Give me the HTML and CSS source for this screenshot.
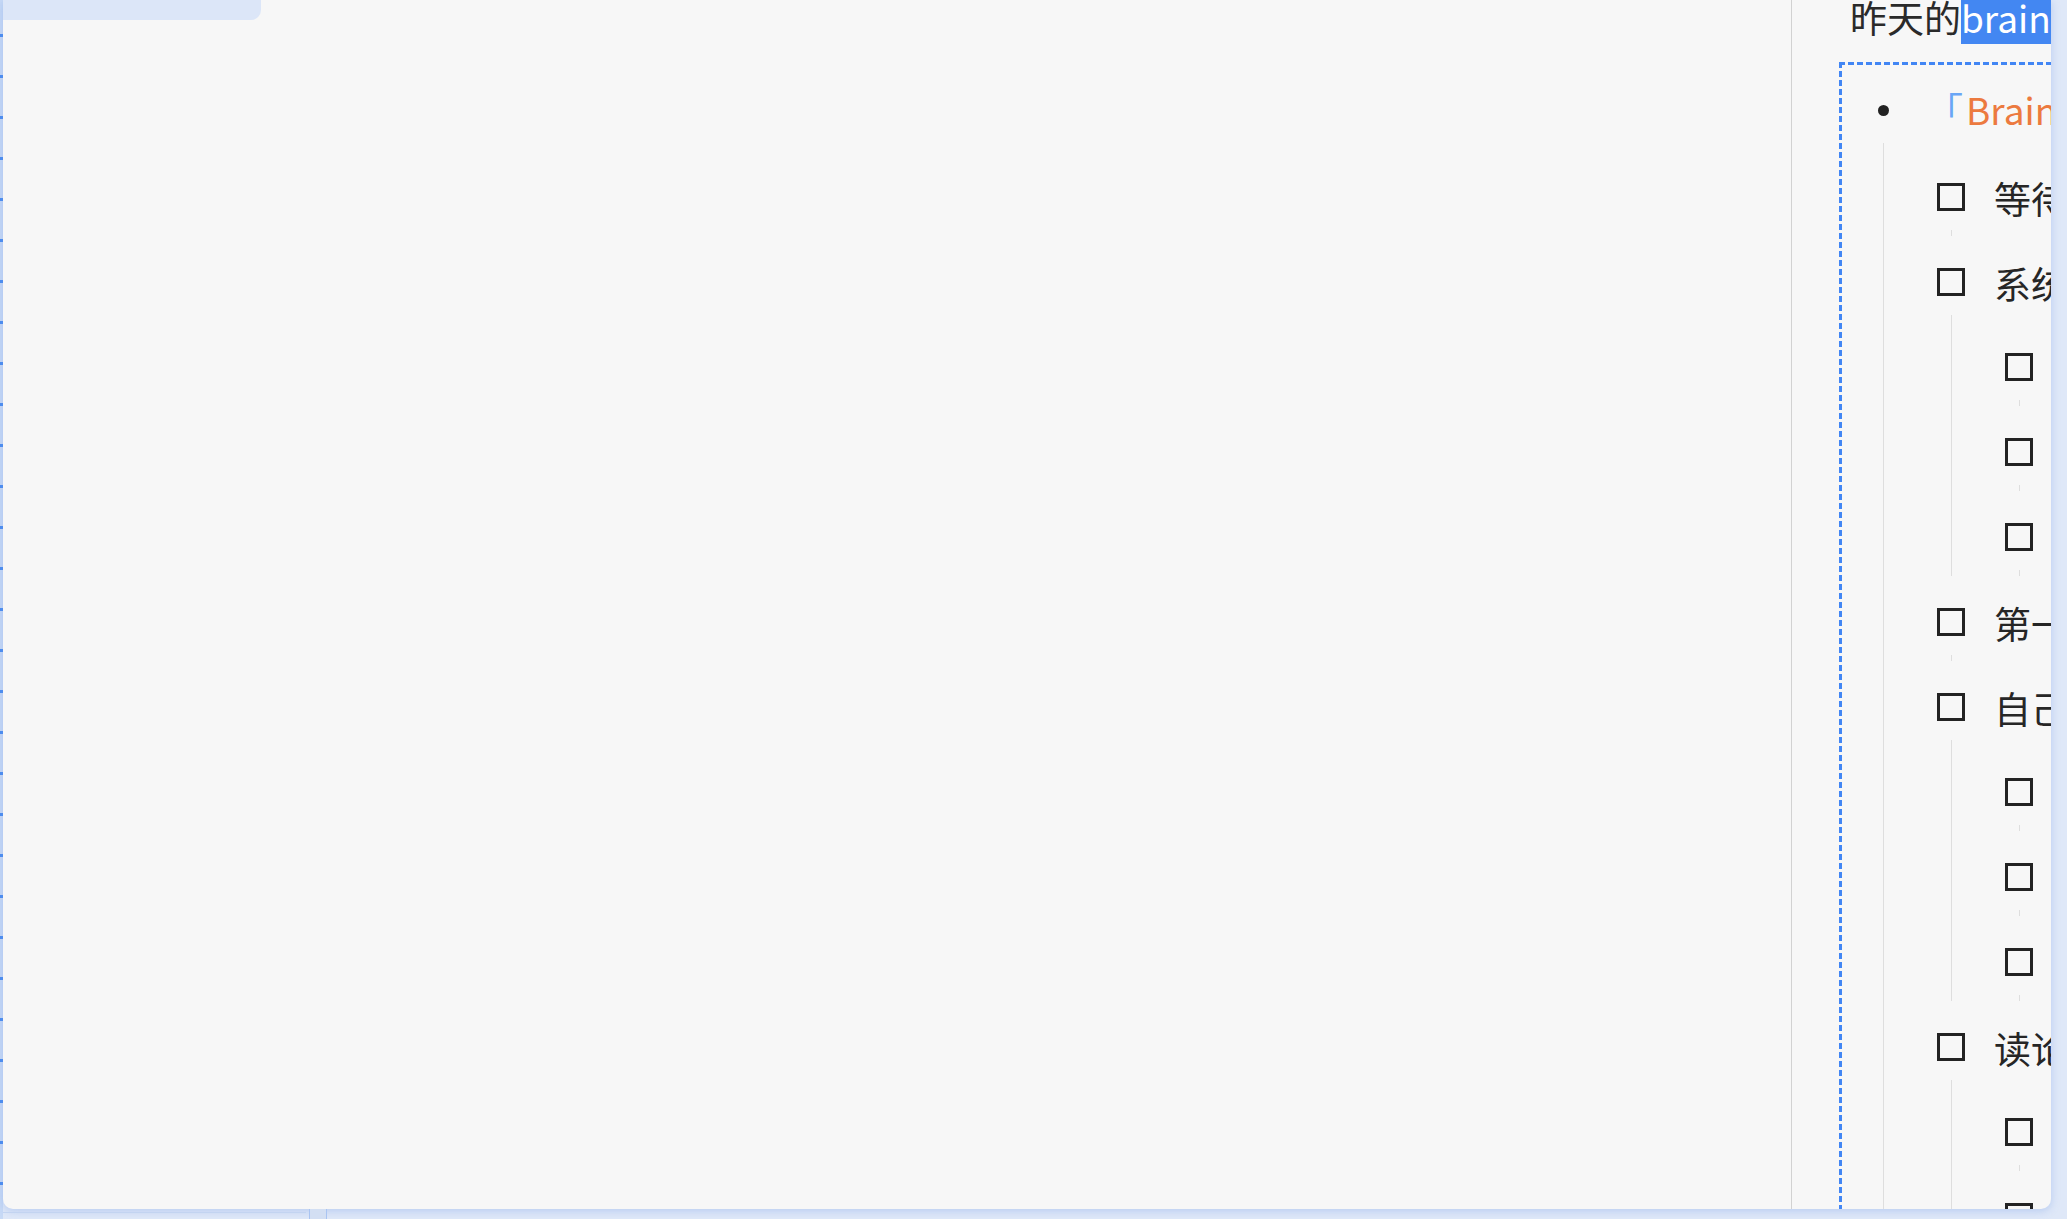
FILE: index.html
```
<!DOCTYPE html>
<html>
<head>
  <link rel="stylesheet" href="styles.css">
</head>
<body>
  <div class="page">
    <div class="rail"></div>
    <div class="main">
      <div class="window">
        <div class="canvas">
          <div class="tab"></div>
        </div>
        <div class="pane">
          <div class="title">昨天的<span class="sel">brain</span>dump</div>
          <div class="outline">
            <ul class="topics">
              <li class="topic">
                <div class="topic-row"><span class="dot"></span><span class="topic-text"><span class="mark">「</span>Brain Dump」</span></div>
                <ul class="tasks">
                  <li class="task"><div class="task-row"><span class="box"></span><span class="label">等待回复邮件</span></div></li>
                  <li class="task">
                    <div class="task-row"><span class="box"></span><span class="label">系统整理笔记</span></div>
                    <ul class="tasks sub">
                      <li class="task"><div class="task-row"><span class="box"></span><span class="label">归档</span></div></li>
                      <li class="task"><div class="task-row"><span class="box"></span><span class="label">标签</span></div></li>
                      <li class="task"><div class="task-row"><span class="box"></span><span class="label">索引</span></div></li>
                    </ul>
                  </li>
                  <li class="task"><div class="task-row"><span class="box"></span><span class="label">第一版草稿</span></div></li>
                  <li class="task">
                    <div class="task-row"><span class="box"></span><span class="label">自己的项目</span></div>
                    <ul class="tasks sub">
                      <li class="task"><div class="task-row"><span class="box"></span><span class="label">需求</span></div></li>
                      <li class="task"><div class="task-row"><span class="box"></span><span class="label">设计</span></div></li>
                      <li class="task"><div class="task-row"><span class="box"></span><span class="label">测试</span></div></li>
                    </ul>
                  </li>
                  <li class="task">
                    <div class="task-row"><span class="box"></span><span class="label">读论文</span></div>
                    <ul class="tasks sub">
                      <li class="task"><div class="task-row"><span class="box"></span><span class="label">摘要</span></div></li>
                      <li class="task"><div class="task-row"><span class="box"></span><span class="label">方法</span></div></li>
                      <li class="task"><div class="task-row"><span class="box"></span><span class="label">实验</span></div></li>
                    </ul>
                  </li>
                </ul>
              </li>
            </ul>
          </div>
        </div>
      </div>
      <div class="below">
        <div class="below-line"></div>
        <div class="below-tab"></div>
      </div>
    </div>
  </div>
</body>
</html>
```
FILE: styles.css
```
html, body {
  margin: 0;
  padding: 0;
}

body {
  font-family: "Noto Sans CJK SC", "Noto Sans", sans-serif;
  background-color: #dfe8f8;
  color: #262626;
  overflow: hidden;
}

.page {
  display: flex;
  height: 1219px;
}

.rail {
  flex: 0 0 3px;
  background-color: #c8daf6;
  background-image: repeating-linear-gradient(to bottom, transparent 0 34px, #4a8cf0 34px 37px, transparent 37px 41px);
}

.main {
  display: flex;
  flex-direction: column;
}

.window {
  display: flex;
  width: 2048px;
  height: 1209px;
  background-color: #f7f7f7;
  border-radius: 0 0 10px 10px;
  overflow: hidden;
  box-shadow: 0 2px 8px rgba(110, 150, 225, 0.35);
}

.canvas {
  flex: 0 0 1788px;
}

.tab {
  width: 258px;
  height: 20px;
  background-color: #dce6f8;
  border-radius: 0 0 10px 0;
}

.pane {
  flex: 1;
  border-left: 1px solid #d2d2d2;
  overflow: hidden;
  white-space: nowrap;
}

.title {
  height: 42px;
  padding-left: 58px;
  font-size: 37px;
  line-height: 34px;
  color: #2a2a2a;
}

.sel {
  background-color: #4387f2;
  color: #fff;
}

.outline {
  width: 400px;
  margin-top: 20px;
  margin-left: 47px;
  padding: 30px 0 0 39px;
  background-image:
    repeating-linear-gradient(to bottom, #4286f4 0 6px, transparent 6px 9px),
    repeating-linear-gradient(to right, #4286f4 0 6px, transparent 6px 9px);
  background-size: 3px 100%, 100% 3px;
  background-position: left top, left top;
  background-repeat: no-repeat;
}

ul {
  list-style: none;
  margin: 0;
  padding: 0;
}

.topic {
  position: relative;
}

.topic::before {
  content: "";
  position: absolute;
  left: 5px;
  top: 51px;
  bottom: 0;
  width: 1px;
  background-color: #dedede;
}

.topic-row {
  display: flex;
  height: 91px;
  font-size: 37px;
  line-height: 34px;
}

.dot {
  flex: none;
  width: 11px;
  height: 11px;
  margin-top: 13px;
  border-radius: 50%;
  background-color: #222;
}

.topic-text {
  margin-left: 37px;
  color: #ec7a3f;
}

.mark {
  display: inline-block;
  width: 40px;
  color: #6aa6f6;
}

.tasks {
  padding-left: 59px;
}

.tasks.sub {
  padding-left: 68px;
}

.task {
  position: relative;
}

.task::before {
  content: "";
  position: absolute;
  left: 14px;
  top: 47px;
  bottom: 32px;
  width: 1px;
  background-color: #dedede;
}

.task-row {
  display: flex;
  height: 85px;
  font-size: 37px;
  line-height: 34px;
}

.box {
  flex: none;
  width: 28px;
  height: 28px;
  border: 3px solid #232323;
  box-sizing: border-box;
}

.label {
  margin-left: 29px;
  margin-top: -2px;
  color: #262626;
}

.below {
  position: relative;
  height: 10px;
}

.below-line {
  width: 303px;
  margin-top: 3px;
  border-top: 1px solid #c3d4f1;
}

.below-tab {
  position: absolute;
  left: 306px;
  top: 0;
  width: 16px;
  height: 10px;
  border-left: 1px solid #a9c4f2;
  border-right: 1px solid #a9c4f2;
  background-color: #d3dff3;
}
```
